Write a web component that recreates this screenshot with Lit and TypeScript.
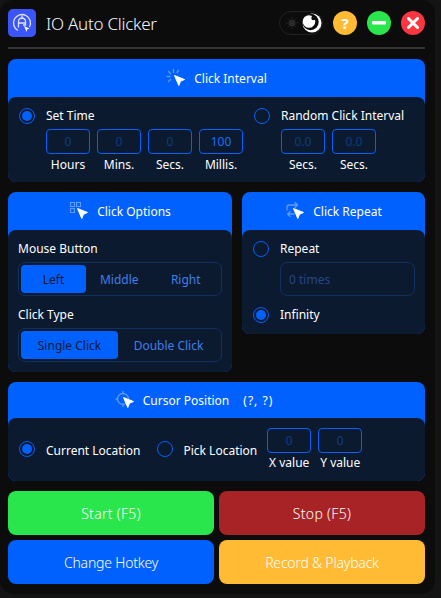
import { LitElement, html, css, svg } from "lit";
import { customElement } from "lit/decorators.js";

const arrow = svg`<path d="M8.5 7.5 L18.5 11.5 L14.5 13.2 L12.8 17.5 Z" fill="#fff" stroke="#fff" stroke-width="1" stroke-linejoin="round"/>`;
const icons = {
  interval: svg`<g stroke="#5f9bff" stroke-width="1.3" stroke-linecap="round" fill="none"><path d="M7.5 1.5V4.5M2.5 3.5L4.5 5.5M1 8.5H4M2.5 13.5L4.5 11.5M12.5 2.5L11 4.5"/></g>${arrow}`,
  options: svg`<g stroke="#5f9bff" stroke-width="1.1" fill="none"><rect x="1.5" y="1.5" width="4" height="4"/><rect x="7.5" y="1.5" width="4" height="4"/><rect x="1.5" y="7.5" width="4" height="4"/></g>${arrow}`,
  repeat: svg`<g stroke="#5f9bff" stroke-width="1.3" fill="none" stroke-linecap="round" stroke-linejoin="round"><path d="M2 9V6.5Q2 4 4.5 4H12M10 1.5L12.5 4L10 6.5"/><path d="M5 10.8L2.5 13L5 15.2M3 13H9"/></g>${arrow}`,
  cursor: svg`<g stroke="#5f9bff" stroke-width="1.3" fill="none" stroke-linecap="round"><circle cx="8" cy="9" r="5.5"/><path d="M8 1.5V3.5M1 9H2.5M8 14.5V16.5"/></g>${arrow}`,
};

@customElement("app-root")
export class AppRoot extends LitElement {
  static styles = css`
    :host { display: block; width: 441px; height: 598px; background: #141414; overflow: hidden; }
    * { box-sizing: border-box; }
    .win { width: 435px; height: 594px; background: #0c0c0c; border-radius: 14px; padding: 9px 10px 10px 8px; font-family: "Noto Sans", sans-serif; font-size: 12px; color: #fff; display: flex; flex-direction: column; }
    .top { display: flex; align-items: center; height: 28px; }
    .logo { width: 28px; height: 28px; border-radius: 5px; background: #3b55fb; display: flex; align-items: center; justify-content: center; margin-right: 10px; }
    .title { font-size: 17px; font-weight: 300; letter-spacing: -0.25px; flex: 1; color: #f4f8ff; }
    .toggle { width: 44px; height: 24px; border: 1px solid #222; border-radius: 12px; display: flex; align-items: center; justify-content: space-between; padding: 0 0 0 6px; }
    .round { width: 24px; height: 24px; border-radius: 50%; display: flex; align-items: center; justify-content: center; margin-left: 10px; }
    .help { background: #ffbb33; color: #fff; font-weight: 700; font-size: 15px; }
    .min { background: #2ae64d; }
    .close { background: #fb3640; }
    .rule { height: 2px; background: #333; margin: 10px 0; }
    .card { background: #0061fe; border-radius: 8px; display: flex; flex-direction: column; }
    .head { height: 38px; display: flex; align-items: center; justify-content: center; gap: 8px; }
    .head svg { width: 20px; height: 20px; }
    .body { background: #0c1a30; border-radius: 8px; flex: 1; }
    .c1 { height: 123px; }
    .c1 .body { display: flex; padding: 11px 11px 0; }
    .radio { width: 16px; height: 16px; border: 1.5px solid #0061fe; border-radius: 50%; flex: none; display: flex; align-items: center; justify-content: center; }
    .radio.on::after { content: ""; width: 10px; height: 10px; border-radius: 50%; background: #0061fe; }
    .ropt { display: flex; align-items: center; gap: 11px; height: 16px; white-space: nowrap; }
    .ropt span { margin-bottom: 2px; }
    .fields { display: flex; gap: 7px; margin: 5px 0 0 27px; }
    .f { width: 44px; display: flex; flex-direction: column; align-items: center; }
    .box { width: 44px; height: 25px; border: 1px solid #0061fe; border-radius: 4px; color: #0e3a85; background: transparent; text-align: center; font: inherit; padding: 0; outline: none; display: block; }
    .box.lit { color: #1d70f5; }
    .f span { margin-top: 1px; line-height: 20px; white-space: nowrap; }
    .rand { margin-left: 11px; }
    .mid { display: flex; gap: 10px; margin-top: 10px; }
    .c2 { width: 224px; height: 180px; }
    .c3 { width: 183px; height: 142px; }
    .c2 .body { padding: 11px 10px 10px; }
    .lab { line-height: 16px; }
    .seg { height: 34px; border: 1px solid #10305f; border-radius: 7px; padding: 2px; display: flex; margin: 5px 0 11px; color: #3f7fe8; }
    .seg:last-child { margin-bottom: 0; }
    .seg div { flex: 1; display: flex; align-items: center; justify-content: center; border-radius: 4px; }
    .seg .on { background: #0061fe; color: #0c1a30; }
    .g65 .on { flex: 0 0 65px; }
    .g97 .on { flex: 0 0 97px; }
    .c3 .body { padding: 11px 11px 0; }
    .rep { height: 34px; margin: 5px 0 11px 27px; width: 135px; border: 1px solid #10305f; border-radius: 7px; background: transparent; font: inherit; color: #234684; padding: 0 8px; outline: none; display: block; }
    .rep::placeholder { color: #234684; opacity: 1; }
    .c4 { height: 99px; margin-top: 10px; }
    .c4 .head { height: 36px; padding-right: 45px; }
    .coord { margin-left: 6px; letter-spacing: 1px; }
    .c4 .body { display: flex; align-items: flex-start; padding: 10px 11px 0; }
    .c4 .ropt { margin-top: 13px; }
    .c4 .ropt span { margin: 2px 0 0; }
    .c4 .pick { margin-left: 17px; gap: 10px; }
    .c4 .two { margin: 0 0 0 10px; }
    .c4 .f span { margin-top: 0; line-height: 20px; }
    .btns { display: grid; grid-template-columns: 206px 206px; gap: 5px; margin-top: 10px; }
    .btn { height: 44px; border-radius: 8px; display: flex; align-items: center; justify-content: center; font-size: 14px; font-weight: 300; }
    .wide { letter-spacing: 0.3px; }
    .tight { letter-spacing: -0.2px; }
    .green { background: #2ae64d; }
    .red { background: #a82325; }
    .blue { background: #0061fe; }
    .amber { background: #ffbb33; }
  `;

  private ic(n: keyof typeof icons) {
    return html`<svg viewBox="0 0 20 20">${icons[n]}</svg>`;
  }
  private radio(label: string, on = false, cls = "") {
    return html`<div class="ropt ${cls}"><div class="radio ${on ? "on" : ""}"></div><span>${label}</span></div>`;
  }
  private field(v: string, l: string, lit = false) {
    return html`<div class="f"><input class="box ${lit ? "lit" : ""}" .value=${v} /><span>${l}</span></div>`;
  }

  render() {
    return html`<div class="win">
      <div class="top">
        <div class="logo">
          <svg width="22" height="22" viewBox="0 0 22 22" fill="none" stroke="#dfe6ff" stroke-width="1.3">
            <path d="M7 18.5A8.5 8.5 0 1 1 18.5 15"/>
            <path d="M7.5 15.5V9.5A3.5 3.5 0 0 1 14.5 9.5V13H12M7.5 11H14.5M11 3.5V7"/>
            <path d="M13 14L18.5 16.5L16.2 17.4L15.5 20Z" fill="#fff" stroke="none"/>
          </svg>
        </div>
        <div class="title">IO Auto Clicker</div>
        <div class="toggle">
          <svg width="12" height="12" viewBox="0 0 12 12"><circle cx="6" cy="6" r="3.5" fill="#2a2a2a"/><g stroke="#2a2a2a" stroke-width="1"><path d="M6 0V1.5M6 10.5V12M0 6H1.5M10.5 6H12M1.8 1.8L2.8 2.8M9.2 9.2L10.2 10.2M1.8 10.2L2.8 9.2M9.2 2.8L10.2 1.8"/></g></svg>
          <svg width="20" height="20" viewBox="0 0 20 20"><circle cx="10" cy="10" r="9.5" fill="#fff"/><circle cx="8.5" cy="9" r="8.2" fill="#0c0c0c"/><circle cx="7" cy="8.5" r="6.3" fill="#fff"/><circle cx="11.5" cy="5" r="2.2" fill="#0c0c0c"/></svg>
        </div>
        <div class="round help">?</div>
        <div class="round min"><svg width="14" height="4"><rect width="14" height="3.5" rx="1" fill="#fff"/></svg></div>
        <div class="round close"><svg width="12" height="12" viewBox="0 0 12 12"><path d="M1.5 1.5L10.5 10.5M10.5 1.5L1.5 10.5" stroke="#fff" stroke-width="3" stroke-linecap="round"/></svg></div>
      </div>
      <div class="rule"></div>

      <section class="card c1">
        <div class="head">${this.ic("interval")}Click Interval</div>
        <div class="body">
          <div>
            ${this.radio("Set Time", true)}
            <div class="fields">
              ${this.field("0", "Hours")}${this.field("0", "Mins.")}${this.field("0", "Secs.")}${this.field("100", "Millis.", true)}
            </div>
          </div>
          <div class="rand">
            ${this.radio("Random Click Interval")}
            <div class="fields">
              ${this.field("0.0", "Secs.")}${this.field("0.0", "Secs.")}
            </div>
          </div>
        </div>
      </section>

      <div class="mid">
        <section class="card c2">
          <div class="head">${this.ic("options")}Click Options</div>
          <div class="body">
            <div class="lab">Mouse Button</div>
            <div class="seg g65"><div class="on">Left</div><div>Middle</div><div>Right</div></div>
            <div class="lab">Click Type</div>
            <div class="seg g97"><div class="on">Single Click</div><div>Double Click</div></div>
          </div>
        </section>
        <section class="card c3">
          <div class="head">${this.ic("repeat")}Click Repeat</div>
          <div class="body">
            ${this.radio("Repeat")}
            <input class="rep" placeholder="0 times" />
            ${this.radio("Infinity", true)}
          </div>
        </section>
      </div>

      <section class="card c4">
        <div class="head">${this.ic("cursor")}<span>Cursor Position</span><span class="coord">(?, ?)</span></div>
        <div class="body">
          ${this.radio("Current Location", true)}
          ${this.radio("Pick Location", false, "pick")}
          <div class="fields two">
            ${this.field("0", "X value")}${this.field("0", "Y value")}
          </div>
        </div>
      </section>

      <div class="btns">
        <div class="btn green wide">Start (F5)</div>
        <div class="btn red wide">Stop (F5)</div>
        <div class="btn blue tight">Change Hotkey</div>
        <div class="btn amber tight">Record &amp; Playback</div>
      </div>
    </div>`;
  }
}
